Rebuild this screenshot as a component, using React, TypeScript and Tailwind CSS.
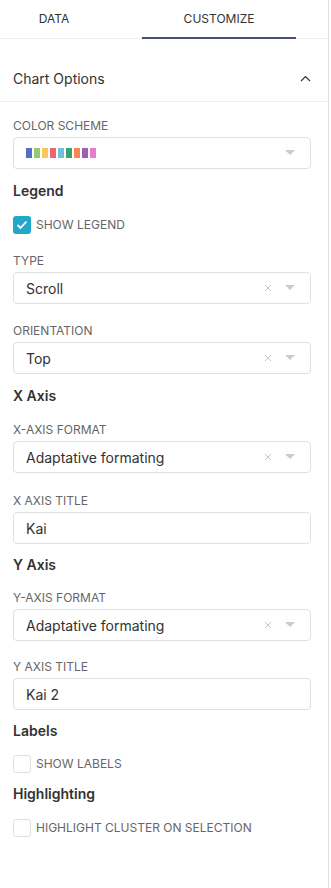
import React from 'react';

const palette = ['#5470c6', '#91cc75', '#fac858', '#ee6666', '#73c0de', '#3ba272', '#fc8452', '#9a60b4', '#ea7ccc'];

const Caret = () => (
  <svg width="10" height="6" viewBox="0 0 10 6" className="shrink-0">
    <path d="M0 0 L10 0 L5 5 Z" fill="#cccccc" />
  </svg>
);

const Clear = () => (
  <svg width="8" height="8" viewBox="0 0 8 8" className="shrink-0">
    <path d="M1 1 L7 7 M7 1 L1 7" stroke="#c8c8c8" strokeWidth="1" />
  </svg>
);

const Label = ({ children }: { children: React.ReactNode }) => (
  <div className="h-4 leading-4 text-[12px] uppercase text-[#666666] mb-[3px]">{children}</div>
);

const Select = ({ value, clearable = true }: { value: React.ReactNode; clearable?: boolean }) => (
  <div className="h-8 rounded-[4px] border border-[#e0e0e0] flex items-center pl-[12px] pr-[15px] bg-white">
    <div className="flex-1 text-[14px] text-[#323232]">{value}</div>
    {clearable && (
      <div className="mr-[13px] flex items-center">
        <Clear />
      </div>
    )}
    <Caret />
  </div>
);

const Input = ({ value }: { value: string }) => (
  <div className="h-8 rounded-[4px] border border-[#e0e0e0] flex items-center px-[12px] text-[14px] text-[#323232]">
    {value}
  </div>
);

const Heading = ({ children, className }: { children: React.ReactNode; className?: string }) => (
  <div className={`h-5 leading-5 text-[14px] font-semibold text-[#323232] ${className}`}>{children}</div>
);

const Checkbox = ({ checked, label, className }: { checked?: boolean; label: string; className?: string }) => (
  <div className={`flex items-center h-[18px] ${className}`}>
    {checked ? (
      <div className="w-[18px] h-[18px] rounded-[3px] bg-[#20a7c9] flex items-center justify-center">
        <svg width="12" height="10" viewBox="0 0 12 10">
          <path d="M1.5 5 L4.5 8 L10.5 1.5" stroke="white" strokeWidth="1.8" fill="none" />
        </svg>
      </div>
    ) : (
      <div className="w-[18px] h-[18px] rounded-[3px] border border-[#e0e0e0] bg-white" />
    )}
    <span className="ml-[5px] text-[12px] uppercase text-[#666666]">{label}</span>
  </div>
);

export default function App() {
  return (
    <div className="w-[331px] h-[888px] bg-white" style={{ fontFamily: 'Inter, "Noto Sans", sans-serif' }}>
      <div className="w-[329px] h-full border-r border-[#e0e0e0] flex flex-col">
        {/* tabs */}
        <div className="h-[39px] border-b border-[#f0f0f0] flex text-[12px] text-[#323232]">
          <div className="w-[108px] flex items-center justify-center">DATA</div>
          <div className="ml-[34px] w-[154px] flex items-center justify-center border-b-2 border-[#484e7a] relative top-[1px] -mt-[1px]">
            CUSTOMIZE
          </div>
        </div>

        {/* collapse header */}
        <div className="mt-4 h-[47px] border-b border-[#f0f0f0] flex items-center justify-between pl-[13px] pr-[17px]">
          <span className="text-[14px] text-[#323232]">Chart Options</span>
          <svg width="11" height="7" viewBox="0 0 11 7">
            <path d="M1 6 L5.5 1.5 L10 6" stroke="#323232" strokeWidth="1.2" fill="none" />
          </svg>
        </div>

        {/* controls */}
        <div className="px-[13px] pr-[17px] pt-4 flex flex-col">
          <Label>Color Scheme</Label>
          <Select
            clearable={false}
            value={
              <div className="flex gap-[2px]">
                {palette.map((c) => (
                  <span key={c} className="w-[6px] h-[10px]" style={{ backgroundColor: c }} />
                ))}
              </div>
            }
          />

          <Heading className="mt-3">Legend</Heading>
          <Checkbox checked label="Show legend" className="mt-[15px]" />

          <div className="mt-[19px]">
            <Label>Type</Label>
            <Select value="Scroll" />
          </div>
          <div className="mt-[19px]">
            <Label>Orientation</Label>
            <Select value="Top" />
          </div>

          <Heading className="mt-3">X Axis</Heading>
          <div className="mt-4">
            <Label>X-axis format</Label>
            <Select value="Adaptative formating" />
          </div>
          <div className="mt-[20px]">
            <Label>X axis title</Label>
            <Input value="Kai" />
          </div>

          <Heading className="mt-[11px]">Y Axis</Heading>
          <div className="mt-[15px]">
            <Label>Y-axis format</Label>
            <Select value="Adaptative formating" />
          </div>
          <div className="mt-[18px]">
            <Label>Y axis title</Label>
            <Input value="Kai 2" />
          </div>

          <Heading className="mt-[11px]">Labels</Heading>
          <Checkbox label="Show labels" className="mt-[14px]" />

          <Heading className="mt-[11px]">Highlighting</Heading>
          <Checkbox label="Highlight cluster on selection" className="mt-[15px]" />
        </div>
      </div>
    </div>
  );
}
